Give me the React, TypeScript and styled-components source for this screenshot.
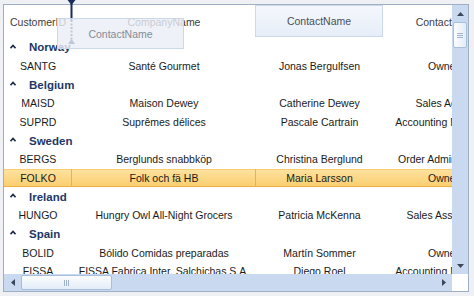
import React from "react";
import styled, { createGlobalStyle } from "styled-components";

const Global = createGlobalStyle`
  html, body { margin: 0; padding: 0; background: #eef0f3; }
  body { padding: 4px 0 0 3px; font-family: "Liberation Sans", Arial, sans-serif; }
`;

const COLS = "68px 184px 127px 121px";
const ROW_H = 56 / 3;

const Frame = styled.div`
  position: relative;
  box-sizing: border-box;
  width: 466px;
  height: 288px;
  border: 1px solid #9eaec4;
  background: #fff;
  display: grid;
  grid-template-columns: 448px 16px;
  grid-template-rows: 269px 17px;
`;

const Viewport = styled.div`
  overflow: hidden;
  display: flex;
  flex-direction: column;
`;

const Header = styled.div`
  display: grid;
  grid-template-columns: ${COLS};
  height: 33px;
  flex: none;
`;

const HeaderCell = styled.div<{ $active?: boolean }>`
  display: flex;
  align-items: center;
  justify-content: center;
  font-size: 10.5px;
  color: #3c3c3c;
  white-space: nowrap;
  box-sizing: border-box;
  ${(p) =>
    p.$active &&
    `
    margin: 0 0 1px -1px;
    border: 1px solid #cdd9ea;
    background: linear-gradient(#f4f7fc, #e7eef8);
    color: #4a4f58;
  `}
`;

const Body = styled.div`
  display: flex;
  flex-direction: column;
`;

const GroupRow = styled.div`
  height: ${ROW_H}px;
  flex: none;
  display: flex;
  align-items: center;
  padding-left: 6px;
  gap: 13px;
  font-size: 11.5px;
  font-weight: bold;
  color: #1e3866;
`;

const Caret = styled.svg`
  width: 6px;
  height: 5px;
  margin-top: -2px;
`;

const DataRow = styled.div<{ $selected?: boolean }>`
  height: ${ROW_H}px;
  flex: none;
  display: grid;
  grid-template-columns: ${COLS};
  font-size: 10.5px;
  color: #1a1a1a;
  ${(p) =>
    p.$selected &&
    `
    background: linear-gradient(#fde3a0, #fbcd6e);
    box-shadow: inset 0 1px #f8cc72, inset 0 -1px #eeae44;
  `}
`;

const Cell = styled.div<{ $sep?: boolean }>`
  display: flex;
  align-items: center;
  justify-content: center;
  white-space: nowrap;
  ${(p) => p.$sep && `box-shadow: inset -1px 0 #eeb04a;`}
`;

const VScroll = styled.div`
  background: #c9daf0;
  display: flex;
  flex-direction: column;
  align-items: center;
`;

const HScroll = styled.div`
  background: #c9daf0;
  display: flex;
  align-items: center;
`;

const Corner = styled.div`
  background: #fff;
`;

const ArrowBtn = styled.div`
  width: 17px;
  height: 17px;
  flex: none;
  display: flex;
  align-items: center;
  justify-content: center;
`;

const Spacer = styled.div`
  flex: 1;
`;

const VThumb = styled.div`
  box-sizing: border-box;
  width: 14px;
  height: 26px;
  border: 1px solid #a8bfdc;
  border-radius: 2px;
  background: linear-gradient(to right, #fbfdff, #e3ecf8);
  display: flex;
  flex-direction: column;
  align-items: center;
  justify-content: center;
  gap: 1px;
`;

const HThumb = styled.div`
  box-sizing: border-box;
  width: 91px;
  height: 15px;
  border: 1px solid #a8bfdc;
  border-radius: 2px;
  background: linear-gradient(#fbfdff, #e3ecf8);
  display: flex;
  align-items: center;
  justify-content: center;
  gap: 1px;
`;

const GripH = styled.span`
  width: 6px;
  height: 1px;
  background: #9fb3cc;
`;

const GripV = styled.span`
  width: 1px;
  height: 6px;
  background: #9fb3cc;
`;

const Ghost = styled.div`
  position: absolute;
  left: 53px;
  top: 13px;
  width: 127px;
  height: 31px;
  box-sizing: border-box;
  border: 1px solid rgba(200, 212, 230, 0.9);
  background: rgba(234, 238, 245, 0.8);
  display: flex;
  align-items: center;
  justify-content: center;
  font-size: 10.5px;
  color: #848b97;
  z-index: 3;
`;

const DropMarker = styled.svg`
  position: absolute;
  left: 63px;
  top: -5px;
  width: 9px;
  height: 46px;
  z-index: 2;
`;

type Row =
  | { group: string }
  | { id: string; company: string; contact: string; title: string; selected?: boolean };

const rows: Row[] = [
  { group: "Norway" },
  { id: "SANTG", company: "Santé Gourmet", contact: "Jonas Bergulfsen", title: "Owner" },
  { group: "Belgium" },
  { id: "MAISD", company: "Maison Dewey", contact: "Catherine Dewey", title: "Sales Agent" },
  { id: "SUPRD", company: "Suprêmes délices", contact: "Pascale Cartrain", title: "Accounting Manager" },
  { group: "Sweden" },
  { id: "BERGS", company: "Berglunds snabbköp", contact: "Christina Berglund", title: "Order Administrator" },
  { id: "FOLKO", company: "Folk och fä HB", contact: "Maria Larsson", title: "Owner", selected: true },
  { group: "Ireland" },
  { id: "HUNGO", company: "Hungry Owl All-Night Grocers", contact: "Patricia McKenna", title: "Sales Associate" },
  { group: "Spain" },
  { id: "BOLID", company: "Bólido Comidas preparadas", contact: "Martín Sommer", title: "Owner" },
  { id: "FISSA", company: "FISSA Fabrica Inter. Salchichas S.A.", contact: "Diego Roel", title: "Accounting Manager" },
];

const Tri = ({ dir }: { dir: "up" | "down" | "left" | "right" }) => {
  const pts = {
    up: "0,4 3.5,0 7,4",
    down: "0,0 7,0 3.5,4",
    left: "4,0 4,7 0,3.5",
    right: "0,0 0,7 4,3.5",
  }[dir];
  const horiz = dir === "left" || dir === "right";
  return (
    <svg width={horiz ? 4 : 7} height={horiz ? 7 : 4} viewBox={horiz ? "0 0 4 7" : "0 0 7 4"}>
      <polygon points={pts} fill="#3b4659" />
    </svg>
  );
};

export default function App() {
  return (
    <>
      <Global />
      <Frame>
        <Viewport>
          <Header>
            <HeaderCell>CustomerID</HeaderCell>
            <HeaderCell>CompanyName</HeaderCell>
            <HeaderCell $active>ContactName</HeaderCell>
            <HeaderCell>ContactTitle</HeaderCell>
          </Header>
          <Body>
            {rows.map((r, i) =>
              "group" in r ? (
                <GroupRow key={i}>
                  <Caret viewBox="0 0 6 5">
                    <polyline points="0.5,4.2 3,1.4 5.5,4.2" fill="none" stroke="#1e2a44" strokeWidth="1.6" />
                  </Caret>
                  {r.group}
                </GroupRow>
              ) : (
                <DataRow key={i} $selected={r.selected}>
                  <Cell $sep={r.selected}>{r.id}</Cell>
                  <Cell $sep={r.selected}>{r.company}</Cell>
                  <Cell>{r.contact}</Cell>
                  <Cell>{r.title}</Cell>
                </DataRow>
              )
            )}
          </Body>
        </Viewport>
        <VScroll>
          <ArrowBtn>
            <Tri dir="up" />
          </ArrowBtn>
          <VThumb>
            <GripH />
            <GripH />
            <GripH />
          </VThumb>
          <Spacer />
          <ArrowBtn>
            <Tri dir="down" />
          </ArrowBtn>
        </VScroll>
        <HScroll>
          <ArrowBtn>
            <Tri dir="left" />
          </ArrowBtn>
          <HThumb>
            <GripV />
            <GripV />
            <GripV />
          </HThumb>
          <Spacer />
          <ArrowBtn>
            <Tri dir="right" />
          </ArrowBtn>
        </HScroll>
        <Corner />
        <DropMarker viewBox="0 0 9 46">
          <polygon points="0.5,0 8.5,0 4.5,5" fill="#1b2c5c" />
          <rect x="3.5" y="0" width="2" height="20" fill="#1b2c5c" />
          <line x1="4.5" y1="20" x2="4.5" y2="41" stroke="#1b2c5c" strokeWidth="2" strokeDasharray="2 1.5" />
          <polygon points="4.5,39 1,44 8,44" fill="#1b2c5c" />
        </DropMarker>
        <Ghost>ContactName</Ghost>
      </Frame>
    </>
  );
}
